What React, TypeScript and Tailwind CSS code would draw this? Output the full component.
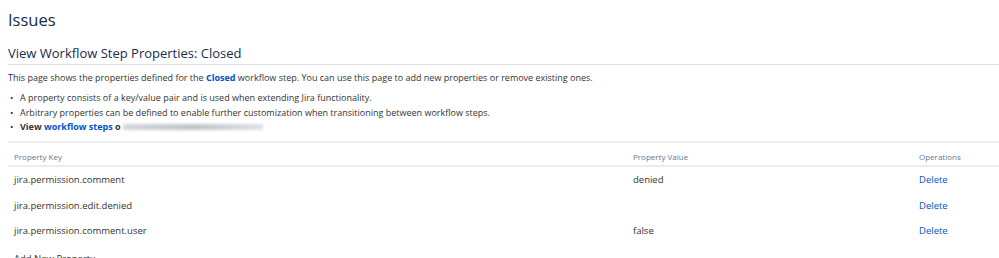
import React from "react";

const rows = [
  { key: "jira.permission.comment", value: "denied" },
  { key: "jira.permission.edit.denied", value: "" },
  { key: "jira.permission.comment.user", value: "false" },
];

export default function App() {
  return (
    <div
      className="w-[999px] h-[258px] overflow-hidden bg-white text-[#172b4d] pl-[8px]"
      style={{ fontFamily: '"Open Sans", "Noto Sans", sans-serif' }}
    >
      <h1 className="text-[16.5px] leading-[20px] pt-[10px] font-normal">Issues</h1>
      <h2 className="mt-[15px] text-[13px] leading-[16px] pb-[3px] border-b border-[#dfe1e6] font-normal">
        View Workflow Step Properties: Closed
      </h2>
      <p className="mt-[7px] text-[9px] leading-[12px] text-[#333]">
        This page shows the properties defined for the{" "}
        <span className="font-bold text-[#0052cc]">Closed</span> workflow step. You can use this
        page to add new properties or remove existing ones.
      </p>
      <ul className="mt-[6px] text-[9px] leading-[15px] text-[#333]">
        <li className="flex items-center">
          <span className="w-[12px] pl-[2px]">•</span>A property consists of a key/value pair and is
          used when extending Jira functionality.
        </li>
        <li className="flex items-center">
          <span className="w-[12px] pl-[2px]">•</span>Arbitrary properties can be defined to enable
          further customization when transitioning between workflow steps.
        </li>
        <li className="flex items-center leading-[13px]">
          <span className="w-[12px] pl-[2px]">•</span>
          <span className="font-bold">View</span>&nbsp;
          <span className="font-bold text-[#0052cc]">workflow steps</span>&nbsp;
          <span className="font-bold">o</span>
          <span className="ml-[2px] inline-block h-[6px] w-[140px] bg-gradient-to-r from-[#d4d6da] via-[#bfc3c9] to-[#dfe1e4] blur-[1.5px]" />
        </li>
      </ul>
      <div className="mt-[8px] border-t-2 border-[#ebecf0]">
        <div className="grid grid-cols-[619px_286px_1fr] border-b-2 border-[#ebecf0] text-[8px] leading-[10px] text-[#6b778c] pt-[9px] pb-[3px]">
          <div className="pl-[6px]">Property Key</div>
          <div className="pl-[6px]">Property Value</div>
          <div className="pl-[6px]">Operations</div>
        </div>
        {rows.map((r) => (
          <div
            key={r.key}
            className="grid grid-cols-[619px_286px_1fr] h-[25.5px] items-start pt-[7px] text-[9.5px] leading-[12px] text-[#333]"
          >
            <div className="pl-[6px]">{r.key}</div>
            <div className="pl-[6px]">{r.value}</div>
            <div className="pl-[6px] text-[#0052cc]">Delete</div>
          </div>
        ))}
        <div className="pl-[6px] text-[9.5px] leading-[12px] text-[#333] pt-[9px]">Add New Property</div>
      </div>
    </div>
  );
}
